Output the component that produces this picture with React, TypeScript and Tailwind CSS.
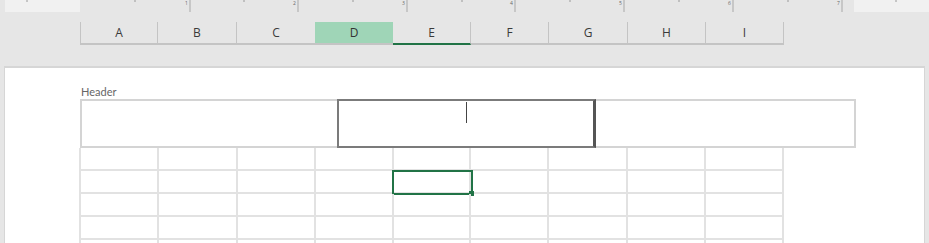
const cols = [
  { key: 'A', w: 78 },
  { key: 'B', w: 79 },
  { key: 'C', w: 78 },
  { key: 'D', w: 78 },
  { key: 'E', w: 78 },
  { key: 'F', w: 78 },
  { key: 'G', w: 79 },
  { key: 'H', w: 78 },
  { key: 'I', w: 78 },
]

const major = [190, 298, 407, 515, 624, 733, 842]
const minor = [27, 135, 244, 353, 462, 570, 679, 788, 896]

function Ruler() {
  return (
    <svg width="929" height="13" className="block">
      <rect x="0" y="0" width="929" height="13" fill="#e6e6e6" />
      <rect x="5" y="0" width="75" height="12" fill="#f1f1f1" />
      <rect x="854" y="0" width="75" height="12" fill="#f1f1f1" />
      {minor.map((x) => (
        <line key={x} x1={x} y1="0" x2={x} y2="2" stroke="#9a9a9a" strokeWidth="1" />
      ))}
      {major.map((x, i) => (
        <g key={x}>
          <line x1={x} y1="0" x2={x} y2="12" stroke="#a8a8a8" strokeWidth="1" />
          <text x={x - 5} y="5" fontSize="5" fill="#666" fontFamily="Open Sans, sans-serif">
            {i + 1}
          </text>
        </g>
      ))}
    </svg>
  )
}

function headerClass(key: string) {
  const base = 'flex items-center justify-center border-b-2 text-[12px] '
  if (key === 'D') return base + 'border-[#c4c4c4] bg-[#9fd5b7] text-[#333]'
  if (key === 'E') return base + 'border-b-[#217346] border-r border-r-[#c4c4c4] text-[#3a3a3a]'
  if (key === 'A') return base + 'border-l border-r border-[#c4c4c4] text-[#3a3a3a]'
  if (key === 'C') return base + 'border-[#c4c4c4] text-[#3a3a3a]'
  return base + 'border-r border-[#c4c4c4] text-[#3a3a3a]'
}

function ColumnHeaders() {
  return (
    <div className="flex h-[23px] mt-[9px] ml-[80px]">
      {cols.map((c) => (
        <div key={c.key} style={{ width: c.w }} className={headerClass(c.key)}>
          <span className="font-['Open_Sans',sans-serif] leading-none">{c.key}</span>
        </div>
      ))}
    </div>
  )
}

function Grid() {
  const rows = [0, 1, 2, 3, 4]
  return (
    <div className="ml-[74px] w-[705px] border-l-2 border-[#e2e2e2]">
      {rows.map((r) => (
        <div key={r} className="flex h-[23px] border-b-2 border-[#e2e2e2]">
          {cols.map((c) => (
            <div
              key={c.key}
              style={{ width: c.w }}
              className="relative border-r-2 border-[#e2e2e2]"
            >
              {r === 1 && c.key === 'E' && (
                <div className="absolute -left-[2px] -top-[1px] w-[81px] h-[25px] border-2 border-[#217346]">
                  <div className="absolute -right-[3px] -bottom-[3px] w-[5px] h-[5px] bg-[#217346]" />
                </div>
              )}
            </div>
          ))}
        </div>
      ))}
    </div>
  )
}

export default function App() {
  return (
    <div className="w-[929px] h-[243px] overflow-hidden bg-[#e6e6e6]">
      <Ruler />
      <ColumnHeaders />
      <div className="mt-[21px] mx-[4px] h-[200px] bg-white border-t-2 border-l border-r border-[#d6d6d6]">
        <div className="pt-[17px] pl-[76px] text-[11px] leading-[14px] text-[#666] font-['Lato',sans-serif]">
          Header
        </div>
        <div className="ml-[75px] w-[776px] h-[49px] flex border-2 border-[#d4d4d4]">
          <div className="w-[255px]" />
          <div className="relative w-[259px] -my-[2px] border-2 border-[#7b7b7b] border-r-[3px] border-r-[#555]">
            <div className="absolute left-[127px] top-[1px] w-[1px] h-[21px] bg-[#444]" />
          </div>
          <div className="flex-1" />
        </div>
        <Grid />
      </div>
    </div>
  )
}
